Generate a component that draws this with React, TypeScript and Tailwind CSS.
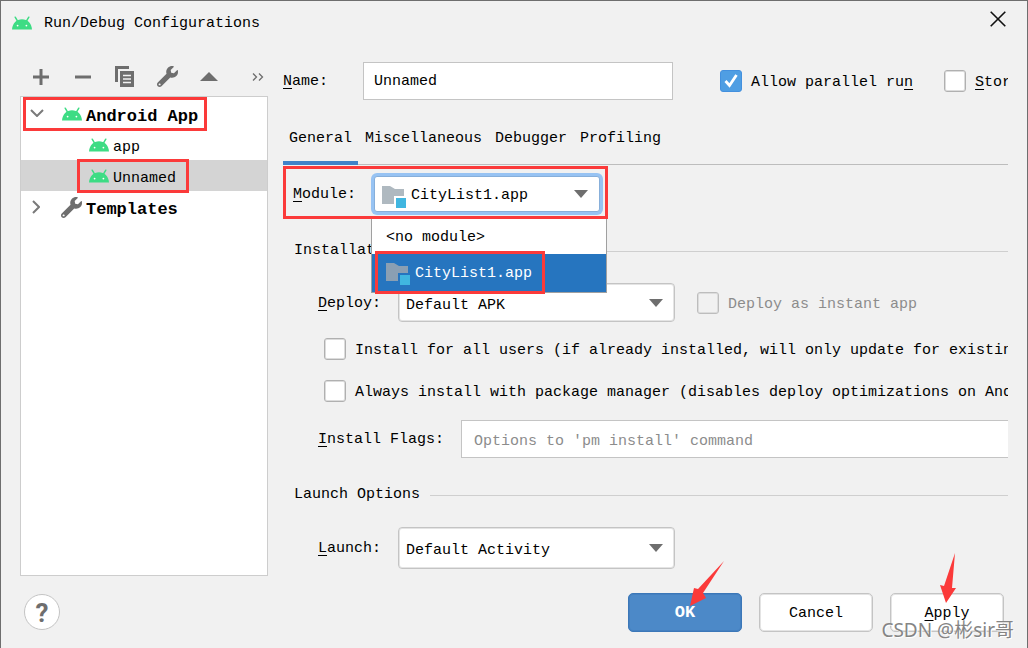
import React, { useState } from 'react';
import { FaWrench } from 'react-icons/fa';

const FONT = "font-['Liberation_Mono','Noto_Sans_CJK_SC',monospace]";

function AndroidIcon({ className }: { className?: string }) {
  return (
    <svg viewBox="0 0 20 14" className={`h-3.5 w-5 shrink-0 ${className ?? ''}`} aria-hidden="true">
      <path d="M3.2 1.2l2.200 3.600M16.800 1.200l-2.200 3.600" stroke="#3ddc84" strokeWidth="1.500" strokeLinecap="round" />
      <path d="M0 13.500C.4 7.200 4.600 3.200 10 3.200s9.600 4 10 10.300z" fill="#3ddc84" />
      <circle cx="5.600" cy="9.600" r=".9" fill="#fff" />
      <circle cx="14.400" cy="9.600" r=".9" fill="#fff" />
    </svg>
  );
}

function FolderIcon({ fill, edge }: { fill: string; edge: string }) {
  return (
    <svg viewBox="0 0 24 22" className="h-[22px] w-6 shrink-0" aria-hidden="true">
      <path d="M0 0h8l5 3h9v15H0z" fill={fill} />
      <path d="M12 10h12v12H12z" fill={edge} />
      <path d="M14 12h10v10H14z" fill="#40b6e0" />
    </svg>
  );
}

function DownTriangle() {
  return (
    <svg viewBox="0 0 14 8" className="pointer-events-none absolute top-1/2 right-3 h-2 w-3.5 -translate-y-1/2" aria-hidden="true">
      <path d="M0 0h14L7 8z" fill="#6e6e6e" />
    </svg>
  );
}

function Mnemonic({ children }: { children: string }) {
  return <u className="underline-offset-3">{children}</u>;
}

function ToolButton({ label, children }: { label: string; children: React.ReactNode }) {
  return (
    <button type="button" aria-label={label} className="flex h-6 w-[42px] items-center justify-center text-[#6e6e6e]">
      {children}
    </button>
  );
}

interface CheckProps {
  children: React.ReactNode;
  checked?: boolean;
  disabled?: boolean;
}

function Check({ children, checked = false, disabled = false }: CheckProps) {
  return (
    <label className={`flex h-[22px] shrink-0 items-center gap-[9px] ${disabled ? 'text-[#8c8c8c]' : ''}`}>
      <span className="relative size-[22px] shrink-0">
        <input
          type="checkbox"
          defaultChecked={checked}
          disabled={disabled}
          className="peer block size-[22px] appearance-none rounded-[3px] border border-[#b0b0b0] bg-white shadow-[inset_0_0_0_1px_#dcdcdc] checked:border-[#4390de] checked:bg-[#4f9ee3] checked:shadow-none disabled:border-[#bdbdbd] disabled:bg-[#f1f1f1]"
        />
        <svg viewBox="0 0 22 22" className="pointer-events-none absolute inset-0 hidden peer-checked:block" aria-hidden="true">
          <path d="M5.500 11l4 4.500L16.500 5" fill="none" stroke="#fff" strokeWidth="2.800" />
        </svg>
      </span>
      <span className="pt-1">{children}</span>
    </label>
  );
}

function Heading({ children }: { children: React.ReactNode }) {
  return (
    <div className="flex h-6 items-center gap-2.5 pl-[11px]">
      <h2>{children}</h2>
      <div className="h-px flex-1 bg-[#cfcfcf]" />
    </div>
  );
}

function App() {
  const [tab, setTab] = useState('General');
  const tabs = ['General', 'Miscellaneous', 'Debugger', 'Profiling'];

  return (
    <div className={`flex min-h-screen w-full flex-col border-x border-t border-[#6e6e6e] bg-[#f1f1f1] text-[15px] leading-5 text-black ${FONT}`}>
      {/* Title bar */}
      <header className="flex h-11 items-center pl-[11px]">
        <AndroidIcon />
        <h1 className="pt-0.5 pl-3">Run/Debug Configurations</h1>
        <button type="button" aria-label="Close" className="mr-[21px] ml-auto h-9 self-start">
          <svg viewBox="0 0 16 16" className="size-4" aria-hidden="true">
            <path d="M.7.7l14.600 14.600M15.300.7L.7 15.300" stroke="#111" strokeWidth="1.600" />
          </svg>
        </button>
      </header>

      <main className="flex flex-1 gap-[15px] px-[19px]">
        {/* Configuration list */}
        <aside className="flex w-62 shrink-0 flex-col">
          <div className="flex h-[51px] items-center pt-3">
            <ToolButton label="Add">
              <svg viewBox="0 0 16 16" className="size-4"><path d="M8 0v16M0 8h16" stroke="currentColor" strokeWidth="3" /></svg>
            </ToolButton>
            <ToolButton label="Remove">
              <svg viewBox="0 0 16 16" className="size-4"><path d="M0 8h16" stroke="currentColor" strokeWidth="3" /></svg>
            </ToolButton>
            <ToolButton label="Copy">
              <svg viewBox="0 0 20 21" className="h-[21px] w-5">
                <path d="M0 0h14v3H3v13H0z" fill="currentColor" />
                <path d="M5 5h14v16H5z" fill="currentColor" />
                <path d="M8 9.500h8M8 13h8M8 16.500h8" stroke="#f1f1f1" strokeWidth="1.300" />
              </svg>
            </ToolButton>
            <ToolButton label="Edit templates"><FaWrench size={21} /></ToolButton>
            <ToolButton label="Move up">
              <svg viewBox="0 0 18 9" className="h-[9px] w-[18px]"><path d="M9 0l9 9H0z" fill="currentColor" /></svg>
            </ToolButton>
            <button type="button" aria-label="More" className="ml-auto pr-1 text-[#6e6e6e]">
              <svg viewBox="0 0 12 8" className="h-2 w-3"><path d="M1 .5L4.500 4 1 7.500M7 .5L10.500 4 7 7.500" fill="none" stroke="currentColor" strokeWidth="1.300" /></svg>
            </button>
          </div>

          <ul className="flex-1 border border-[#cdcdcd] bg-white pt-px">
            <li className="relative flex h-[31px] items-center pt-1.5 pl-[9px] text-[17px] font-bold">
              <svg viewBox="0 0 14 8" className="mr-[18px] mb-2 h-2 w-3.5"><path d="M1 1l6 6 6-6" fill="none" stroke="#7a7a7a" strokeWidth="2" /></svg>
              <AndroidIcon className="mb-1.5" />
              <span className="pl-1">Android App</span>
              <div className="absolute -top-px left-0.5 h-[34px] w-[184px] border-3 border-[#fb3a3a]" />
            </li>
            <li className="flex h-[31px] items-center pt-1.5 pl-[68px]">
              <AndroidIcon className="mb-1.5" />
              <span className="pl-1">app</span>
            </li>
            <li className="relative flex h-[31px] items-center bg-[#d4d4d4] pt-1.5 pl-[68px]">
              <AndroidIcon className="mb-1.5" />
              <span className="pl-1">Unnamed</span>
              <div className="absolute -top-px left-14 h-[34px] w-28 border-3 border-[#fb3a3a]" />
            </li>
            <li className="flex h-[31px] items-center pt-1.5 pl-[11px] text-[17px] font-bold">
              <svg viewBox="0 0 8 14" className="mr-[21px] mb-1.5 h-3.5 w-2"><path d="M1 1l6 6-6 6" fill="none" stroke="#7a7a7a" strokeWidth="2" /></svg>
              <FaWrench size={21} className="mb-1 shrink-0 text-[#6e6e6e]" />
              <span className="pl-1">Templates</span>
            </li>
          </ul>
        </aside>

        {/* Selected configuration */}
        <section className="min-w-0 flex-1 overflow-hidden pt-[17px] whitespace-nowrap">
          <div className="flex h-[38px] items-center">
            <label htmlFor="name" className="w-20 shrink-0 pt-0.5"><Mnemonic>N</Mnemonic>ame:</label>
            <input id="name" defaultValue="Unnamed" className="h-[38px] w-[310px] shrink-0 border border-[#c4c4c4] bg-white px-2.5" />
            <div className="flex gap-[31px] pl-[47px]">
              <Check checked>Allow parallel ru<Mnemonic>n</Mnemonic></Check>
              <Check><Mnemonic>S</Mnemonic>tore as project file</Check>
            </div>
          </div>

          <nav className="mt-[15px] flex h-[50px] gap-px border-b border-[#bdbdbd]">
            {tabs.map((name) => (
              <button
                key={name}
                type="button"
                onClick={() => setTab(name)}
                className={`-mb-px border-b-4 px-1.5 pt-0.5 ${tab === name ? 'border-[#4083c9]' : 'border-transparent'}`}
              >
                {name}
              </button>
            ))}
          </nav>

          <div className="mt-px flex h-[53px] w-[325px] items-center border-3 border-[#fb3a3a] pt-[3px] pl-[7px]">
            <label htmlFor="module" className="w-[81px] shrink-0 pt-0.5"><Mnemonic>M</Mnemonic>odule:</label>
            <div className="relative">
              <select id="module" className="block h-9 w-[226px] appearance-none rounded-[3px] border border-[#87afda] bg-white pt-1 pl-9 ring-3 ring-[#97c3f3]">
                <option>CityList1.app</option>
                <option>&lt;no module&gt;</option>
              </select>
              <div className="pointer-events-none absolute top-2.5 left-2">
                <FolderIcon fill="#afb9c0" edge="#fff" />
              </div>
              <DownTriangle />
              <ul className="absolute top-[43px] -left-[3px] z-10 w-[236px] border border-t-0 border-[#a0a0a0] bg-white">
                <li className="flex h-[35px] items-center pt-0.5 pl-3.5">&lt;no module&gt;</li>
                <li className="relative flex h-[38px] items-center bg-[#2675bf] pt-0.5 pl-3.5 text-white">
                  <FolderIcon fill="#8a9fb3" edge="#2675bf" />
                  <span className="pl-[5px]">CityList1.app</span>
                  <div className="absolute -top-[3px] left-[3px] h-[43px] w-[170px] border-3 border-[#fb3a3a]" />
                </li>
              </ul>
            </div>
          </div>

          <div className="mt-5">
            <Heading>Installation Options</Heading>
          </div>

          <div className="mt-5 flex h-[39px] items-center pl-[35px]">
            <label htmlFor="deploy" className="w-20 shrink-0 pt-0.5"><Mnemonic>D</Mnemonic>eploy:</label>
            <div className="relative mr-[22px] shrink-0">
              <select id="deploy" className="block h-[39px] w-[277px] appearance-none rounded-[4px] border border-[#c4c4c4] bg-white pt-1.5 pl-[7px] shadow-[inset_0_0_0_1px_#e4e4e4]">
                <option>Default APK</option>
              </select>
              <DownTriangle />
            </div>
            <Check disabled>Deploy as instant app</Check>
          </div>

          <div className="mt-4 flex flex-col gap-5 pl-[41px]">
            <Check>Install for all users (if already installed, will only update for existing users)</Check>
            <Check>Always install with package manager (disables deploy optimizations on Android 11+)</Check>
          </div>

          <div className="mt-[18px] flex h-[38px] items-center pl-[35px]">
            <label htmlFor="flags" className="w-[143px] shrink-0 pt-0.5"><Mnemonic>I</Mnemonic>nstall Flags:</label>
            <input
              id="flags"
              placeholder="Options to 'pm install' command"
              className="h-[38px] min-w-0 flex-1 border border-r-0 border-[#c4c4c4] bg-white px-3 pt-1 placeholder:text-[#8c8c8c]"
            />
          </div>

          <div className="mt-[25px]">
            <Heading>Launch Options</Heading>
          </div>

          <div className="mt-5 flex h-[42px] items-center pl-[35px]">
            <label htmlFor="launch" className="w-20 shrink-0 pt-0.5"><Mnemonic>L</Mnemonic>aunch:</label>
            <div className="relative shrink-0">
              <select id="launch" className="block h-[42px] w-[277px] appearance-none rounded-[4px] border border-[#c4c4c4] bg-white pt-1.5 pl-[7px] shadow-[inset_0_0_0_1px_#e4e4e4]">
                <option>Default Activity</option>
              </select>
              <DownTriangle />
            </div>
          </div>
        </section>
      </main>

      <footer className="relative flex h-[72px] items-center gap-[17px] px-[23px]">
        <button type="button" aria-label="Help" className="mr-auto flex size-9 items-center justify-center rounded-full border border-[#c4c4c4] bg-white pt-0.5 font-['Roboto',sans-serif] text-[26px] font-bold text-[#6e6e6e]">
          ?
        </button>
        <div className="relative">
          <button type="button" className="block h-[39px] w-[114px] rounded-[5px] border border-[#3b77b8] bg-[#4c89c8] pt-0.5 text-[17px] font-bold text-white shadow-[inset_0_0_0_1px_#4480c0]">OK</button>
          <svg viewBox="0 0 36 46" className="pointer-events-none absolute -top-8 left-[61px] h-[46px] w-9" aria-hidden="true">
            <path d="M35 0L14 32l3 5L1 45l4-18 4 1z" fill="#fb3a3a" />
          </svg>
        </div>
        <button type="button" className="h-[39px] w-[114px] rounded-[5px] border border-[#c4c4c4] bg-white pt-1 shadow-[inset_0_0_0_1px_#e4e4e4]">Cancel</button>
        <div className="relative">
          <button type="button" className="block h-[39px] w-[114px] rounded-[5px] border border-[#c4c4c4] bg-white pt-1 shadow-[inset_0_0_0_1px_#e4e4e4]"><Mnemonic>A</Mnemonic>pply</button>
          <svg viewBox="0 0 18 52" className="pointer-events-none absolute -top-10 left-[49px] h-[52px] w-[18px]" aria-hidden="true">
            <path d="M16 0l-3 35h4L7 50 1 32l4 1z" fill="#fb3a3a" />
          </svg>
        </div>
        <div className="pointer-events-none absolute right-[13px] bottom-1 font-['Noto_Sans','Noto_Sans_CJK_SC',sans-serif] text-[19px] leading-7 text-[#858585] [text-shadow:1px_1px_0_#fff]">
          CSDN @彬sir哥
        </div>
      </footer>
    </div>
  );
}

export default App;
